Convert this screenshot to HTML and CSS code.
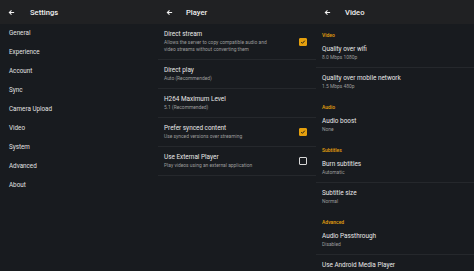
FILE: index.html
```html
<!DOCTYPE html>
<html lang="en">
<head>
    <meta charset="UTF-8">
    <meta name="viewport" content="width=device-width, initial-scale=1.0">
    <title>Settings</title>
    <link rel="stylesheet" href="styles.css">
</head>
<body>
    <div class="screens">
        <div class="screen settings">
            <div class="topbar">
                <svg class="back" viewBox="0 0 16 16"><path d="M14 8H3M8 3L3 8l5 5" /></svg>
                <span class="title">Settings</span>
            </div>
            <div class="menu">
                <div class="menu-item">General</div>
                <div class="menu-item">Experience</div>
                <div class="menu-item">Account</div>
                <div class="menu-item">Sync</div>
                <div class="menu-item">Camera Upload</div>
                <div class="menu-item">Video</div>
                <div class="menu-item">System</div>
                <div class="menu-item">Advanced</div>
                <div class="menu-item">About</div>
            </div>
        </div>

        <div class="screen player">
            <div class="topbar">
                <svg class="back" viewBox="0 0 16 16"><path d="M14 8H3M8 3L3 8l5 5" /></svg>
                <span class="title">Player</span>
            </div>
            <div class="row line">
                <div class="text">
                    <div class="row-title">Direct stream</div>
                    <div class="row-sub">Allows the server to copy compatible audio and video streams without converting them</div>
                </div>
                <span class="check on"><svg viewBox="0 0 10 10"><path d="M2 5.2l2 2 4-4.4" /></svg></span>
            </div>
            <div class="row line">
                <div class="text">
                    <div class="row-title">Direct play</div>
                    <div class="row-sub">Auto (Recommended)</div>
                </div>
            </div>
            <div class="row line">
                <div class="text">
                    <div class="row-title">H264 Maximum Level</div>
                    <div class="row-sub">5.1 (Recommended)</div>
                </div>
            </div>
            <div class="row line">
                <div class="text">
                    <div class="row-title">Prefer synced content</div>
                    <div class="row-sub">Use synced versions over streaming</div>
                </div>
                <span class="check on"><svg viewBox="0 0 10 10"><path d="M2 5.2l2 2 4-4.4" /></svg></span>
            </div>
            <div class="row line">
                <div class="text">
                    <div class="row-title">Use External Player</div>
                    <div class="row-sub">Play videos using an external application</div>
                </div>
                <span class="check"></span>
            </div>
        </div>

        <div class="screen video">
            <div class="topbar">
                <svg class="back" viewBox="0 0 16 16"><path d="M14 8H3M8 3L3 8l5 5" /></svg>
                <span class="title">Video</span>
            </div>
            <div class="section">Video</div>
            <div class="row line">
                <div class="text">
                    <div class="row-title">Quality over wifi</div>
                    <div class="row-sub">8.0 Mbps 1080p</div>
                </div>
            </div>
            <div class="row">
                <div class="text">
                    <div class="row-title">Quality over mobile network</div>
                    <div class="row-sub">1.5 Mbps 480p</div>
                </div>
            </div>
            <div class="section">Audio</div>
            <div class="row">
                <div class="text">
                    <div class="row-title">Audio boost</div>
                    <div class="row-sub">None</div>
                </div>
            </div>
            <div class="section">Subtitles</div>
            <div class="row line">
                <div class="text">
                    <div class="row-title">Burn subtitles</div>
                    <div class="row-sub">Automatic</div>
                </div>
            </div>
            <div class="row">
                <div class="text">
                    <div class="row-title">Subtitle size</div>
                    <div class="row-sub">Normal</div>
                </div>
            </div>
            <div class="section">Advanced</div>
            <div class="row line">
                <div class="text">
                    <div class="row-title">Audio Passthrough</div>
                    <div class="row-sub">Disabled</div>
                </div>
            </div>
            <div class="row">
                <div class="text">
                    <div class="row-title">Use Android Media Player</div>
                </div>
            </div>
        </div>
    </div>
</body>
</html>
```

FILE: styles.css
```css
body {
    margin: 0;
    font-family: Roboto, 'Noto Sans', sans-serif;
    background: #181b1f;
    color: #e8e8e8;
    overflow: hidden;
}
.screens {
    display: grid;
    grid-template-columns: 158px 158px 158px;
    height: 271px;
}
.screen {
    background: #181b1f;
    overflow: hidden;
}
.topbar {
    height: 24px;
    background: #202123;
    display: flex;
    align-items: center;
    padding-left: 8px;
}
.topbar .back {
    width: 7px;
    height: 7px;
    margin-right: 13px;
}
.topbar .back path {
    fill: none;
    stroke: #f2f2f2;
    stroke-width: 2.4;
}
.topbar .title {
    font-size: 7.6px;
    font-weight: 500;
    color: #f0f0f0;
}
.settings .topbar .back {
    margin-right: 15px;
}
.video .topbar .back {
    margin-right: 14px;
}

.menu-item {
    padding: 5px 9px;
    line-height: 9px;
    font-size: 6.3px;
    color: #e2e2e2;
}

.row {
    display: flex;
    align-items: center;
    padding: 6px 9px 6px 6px;
}
.row.line {
    border-bottom: 1px solid #25282c;
}
.row .text {
    flex: 1;
}
.row-title {
    font-size: 6.4px;
    line-height: 9px;
    color: #e8e8e8;
}
.row-sub {
    font-size: 4.9px;
    line-height: 7px;
    color: #9c9c9c;
    padding-right: 18px;
}
.section {
    padding: 7px 6px 0;
    line-height: 8px;
    font-size: 5px;
    font-weight: 500;
    color: #e5a00d;
}

.check {
    width: 6px;
    height: 6px;
    border: 1px solid #d8d8d8;
    border-radius: 1px;
    display: flex;
    margin-left: 6px;
}
.check.on {
    background: #e5a00d;
    border-color: #e5a00d;
}
.check svg {
    width: 6px;
    height: 6px;
}
.check svg path {
    fill: none;
    stroke: #1b1b1b;
    stroke-width: 1.6;
}
```
